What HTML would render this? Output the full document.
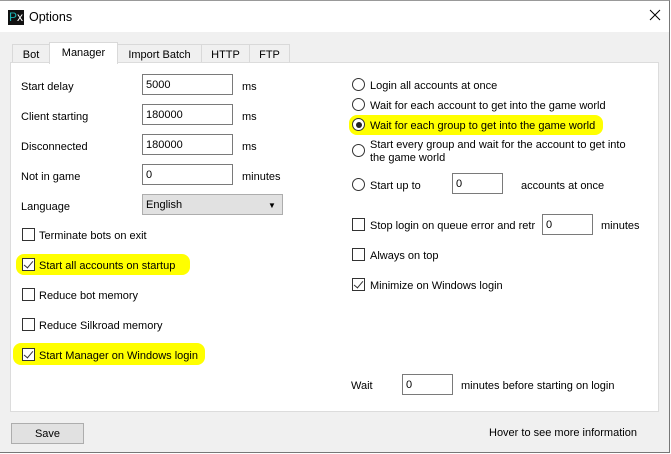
<!DOCTYPE html>
<html><head><style>
*{margin:0;padding:0;box-sizing:border-box}
body{width:671px;height:454px;overflow:hidden;background:#fff;font-family:"Liberation Sans",sans-serif;font-size:11px;color:#000;position:relative}
.a{position:absolute;white-space:nowrap}
.t{margin-top:2px}
.win{position:absolute;left:0;top:0;width:670px;height:453px;border:1px solid #777;border-left:none;border-top:1px solid #999}
.body{position:absolute;left:0;top:32px;width:669px;height:420px;background:#f0f0f0}
.tab{position:absolute;top:44px;height:19px;background:#f0f0f0;border:1px solid #d9d9d9;border-bottom:none;text-align:center;line-height:20px}
.panel{position:absolute;left:10px;top:62px;width:649px;height:350px;background:#fff;border:1px solid #dcdcdc}
.tb{position:absolute;height:21px;border:1px solid #7a7a7a;background:#fff;padding-left:3px;line-height:21px}
.cb{position:absolute;width:13px;height:13px;border:1px solid #333;background:#fff}
.cb.c::after{content:"";position:absolute;left:3px;top:0px;width:4px;height:8px;border-right:1.3px solid #333;border-bottom:1.3px solid #333;transform:rotate(40deg)}
.rb{position:absolute;width:13px;height:13px;border:1px solid #333;border-radius:50%;background:#fff}
.rb.c::after{content:"";position:absolute;left:2.5px;top:2.5px;width:6px;height:6px;border-radius:50%;background:#222}
.hl{position:absolute;background:#ffff00;border-radius:8px}
</style></head><body>
<div class="win"></div>
<div class="a" style="left:8px;top:10px;width:16px;height:15px;background:#111"></div>
<div class="a" style="left:9px;top:10px;font-size:12px;line-height:15px;color:#1ab5b5">P<span style="color:#fff">x</span></div>
<div class="a" style="left:29px;top:10px;font-size:12.5px">Options</div>
<svg class="a" style="left:649px;top:9px" width="12" height="12"><path d="M1 1L11 11M11 1L1 11" stroke="#000" stroke-width="1"/></svg>
<div class="body"></div>
<div class="tab" style="left:12px;width:38px">Bot</div>
<div class="tab" style="left:117px;width:85px">Import Batch</div>
<div class="tab" style="left:201px;width:49px">HTTP</div>
<div class="tab" style="left:249px;width:41px">FTP</div>
<div class="panel"></div>
<div class="tab" style="left:49px;top:42px;width:69px;height:22px;background:#fff;z-index:2">Manager</div>

<div class="hl" style="left:16px;top:254px;width:174px;height:21px"></div>
<div class="hl" style="left:13px;top:343px;width:192px;height:22px"></div>
<div class="hl" style="left:349px;top:115px;width:254px;height:20px"></div>

<div class="a t" style="left:21px;top:79px">Start delay</div>
<div class="a t" style="left:21px;top:109px">Client starting</div>
<div class="a t" style="left:21px;top:139px">Disconnected</div>
<div class="a t" style="left:21px;top:169px">Not in game</div>
<div class="a t" style="left:21px;top:199px">Language</div>
<div class="tb" style="left:142px;top:74px;width:91px">5000</div>
<div class="tb" style="left:142px;top:104px;width:91px">180000</div>
<div class="tb" style="left:142px;top:134px;width:91px">180000</div>
<div class="tb" style="left:142px;top:164px;width:91px">0</div>
<div class="a t" style="left:242px;top:79px">ms</div>
<div class="a t" style="left:242px;top:109px">ms</div>
<div class="a t" style="left:242px;top:139px">ms</div>
<div class="a t" style="left:242px;top:169px">minutes</div>
<div class="tb" style="left:142px;top:194px;width:141px;background:#e1e1e1;border-color:#adadad">English</div>
<div class="a" style="left:268px;top:201px;font-size:8px">▼</div>

<div class="cb" style="left:22px;top:228px"></div><div class="a t" style="left:39px;top:228px">Terminate bots on exit</div>
<div class="cb c" style="left:22px;top:258px"></div><div class="a t" style="left:39px;top:258px">Start all accounts on startup</div>
<div class="cb" style="left:22px;top:288px"></div><div class="a t" style="left:39px;top:288px">Reduce bot memory</div>
<div class="cb" style="left:22px;top:318px"></div><div class="a t" style="left:39px;top:318px">Reduce Silkroad memory</div>
<div class="cb c" style="left:22px;top:348px"></div><div class="a t" style="left:39px;top:348px">Start Manager on Windows login</div>

<div class="rb" style="left:352px;top:78px"></div><div class="a t" style="left:370px;top:78px">Login all accounts at once</div>
<div class="rb" style="left:352px;top:98px"></div><div class="a t" style="left:370px;top:98px">Wait for each account to get into the game world</div>
<div class="rb c" style="left:352px;top:118px"></div><div class="a t" style="left:370px;top:118px">Wait for each group to get into the game world</div>
<div class="rb" style="left:352px;top:144px"></div><div class="a" style="left:370px;top:139px;line-height:13px">Start every group and wait for the account to get into<br>the game world</div>
<div class="rb" style="left:352px;top:178px"></div><div class="a t" style="left:370px;top:178px">Start up to</div>
<div class="tb" style="left:452px;top:173px;width:51px">0</div>
<div class="a t" style="left:521px;top:178px">accounts at once</div>

<div class="cb" style="left:352px;top:218px"></div><div class="a t" style="left:370px;top:218px">Stop login on queue error and retr</div>
<div class="tb" style="left:542px;top:214px;width:51px">0</div>
<div class="a t" style="left:601px;top:218px">minutes</div>
<div class="cb" style="left:352px;top:248px"></div><div class="a t" style="left:370px;top:248px">Always on top</div>
<div class="cb c" style="left:352px;top:278px"></div><div class="a t" style="left:370px;top:278px">Minimize on Windows login</div>

<div class="a t" style="left:351px;top:378px">Wait</div>
<div class="tb" style="left:402px;top:374px;width:51px">0</div>
<div class="a t" style="left:461px;top:378px">minutes before starting on login</div>

<div class="a" style="left:11px;top:423px;width:73px;height:21px;background:#e1e1e1;border:1px solid #adadad;text-align:center;line-height:21px">Save</div>
<div class="a t" style="left:489px;top:425px">Hover to see more information</div>
</body></html>
